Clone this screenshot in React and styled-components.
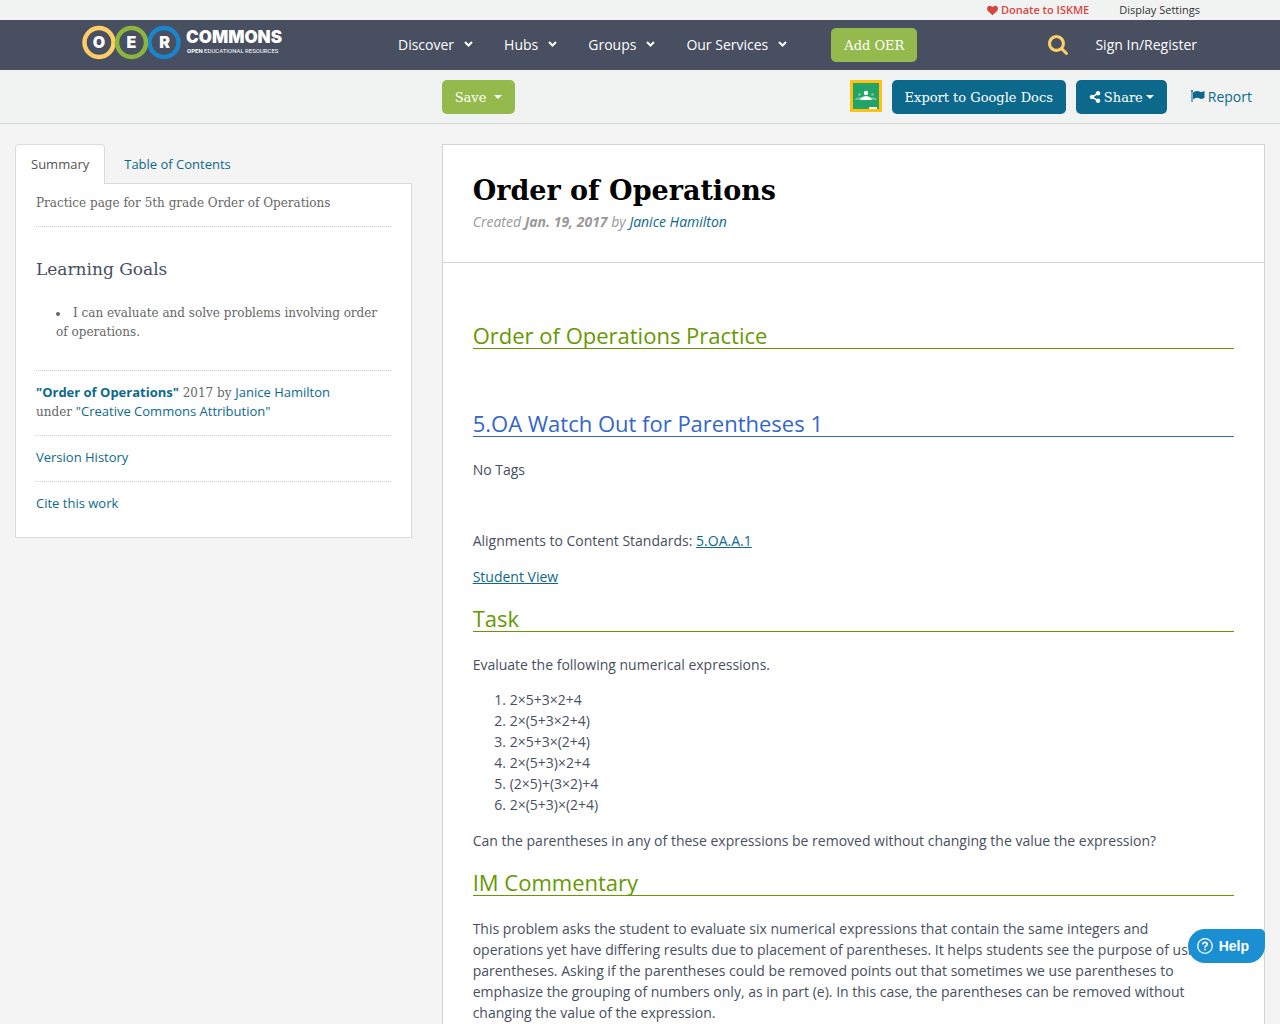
import styled, { createGlobalStyle } from "styled-components"
import { FaShareAlt } from "react-icons/fa"

const navItems = ["Discover", "Hubs", "Groups", "Our Services"]

const expressions = [
  "2×5+3×2+4",
  "2×(5+3×2+4)",
  "2×5+3×(2+4)",
  "2×(5+3)×2+4",
  "(2×5)+(3×2)+4",
  "2×(5+3)×(2+4)",
]

const Logo = () => (
  <svg width="204" height="36" viewBox="0 0 204 36" role="img" aria-label="OER Commons">
    <g fill="none" strokeWidth="4.500">
      <circle cx="17" cy="17.500" r="14.500" stroke="#fdce68" />
      <circle cx="82" cy="17.500" r="14.500" stroke="#1a85cd" />
      <circle cx="49.500" cy="17.500" r="14.500" stroke="#8bb53c" />
    </g>
    <g fill="#fff" fontFamily="Inter, sans-serif" fontWeight="900">
      <g fontSize="16" textAnchor="middle">
        <text x="17" y="23">O</text>
        <text x="49.500" y="23">E</text>
        <text x="82.500" y="23">R</text>
      </g>
      <text x="104" y="18" fontSize="17">COMMONS</text>
    </g>
    <g fill="#fff" fontFamily="Roboto, sans-serif" fontSize="6">
      <text x="105" y="28"><tspan fontWeight="bold">OPEN</tspan> EDUCATIONAL RESOURCES</text>
    </g>
  </svg>
)

const HeartIcon = () => (
  <svg width="11" height="11" viewBox="0 0 1792 1792" fill="currentColor" aria-hidden="true">
    <path d="M896 1664q-26 0-44-18l-624-602q-10-8-27.500-26t-55.500-65.500-68-97.500-53.500-121-23.500-138q0-220 127-344t351-124q62 0 126.500 21.500t120 58 95.500 68.500 76 68q36-36 76-68t95.500-68.500 120-58 126.500-21.500q224 0 351 124t127 344q0 221-229 450l-623 600q-18 18-44 18z" />
  </svg>
)

const SearchIcon = () => (
  <svg width="20" height="20" viewBox="0 128 1664 1664" fill="currentColor" aria-hidden="true">
    <path d="M1152 832q0-185-131.500-316.500t-316.500-131.500-316.500 131.500-131.500 316.500 131.500 316.500 316.500 131.500 316.500-131.500 131.500-316.500zm512 832q0 52-38 90t-90 38q-54 0-90-38l-343-342q-179 124-399 124-143 0-273.500-55.500t-225-150-150-225-55.500-273.500 55.500-273.500 150-225 225-150 273.500-55.500 273.500 55.500 225 150 150 225 55.500 273.500q0 220-124 399l343 343q37 37 37 90z" />
  </svg>
)

const FlagIcon = () => (
  <svg width="14" height="14" viewBox="64 0 1792 1792" fill="currentColor" aria-hidden="true">
    <path d="M320 256q0 72-64 110v1266q0 13-9.500 22.500t-22.500 9.500h-64q-13 0-22.500-9.500t-9.500-22.500v-1266q-64-38-64-110 0-53 37.500-90.500t90.500-37.500 90.500 37.500 37.500 90.500zm1472 64v763q0 25-12.500 38.500t-39.500 27.500q-215 116-369 116-61 0-123.500-22t-108.500-48-115.500-48-142.500-22q-192 0-464 146-17 9-33 9-26 0-45-19t-19-45v-742q0-32 31-55 21-14 79-43 236-120 421-120 107 0 200 29t219 88q38 19 88 19 54 0 117.500-21t110-47 88-47 54.500-21q26 0 45 19t19 45z" />
  </svg>
)

const Chevron = () => (
  <svg width="9" height="6" viewBox="0 0 9 6" fill="none" stroke="#fff" strokeWidth="2" aria-hidden="true">
    <path d="M1 1l3.500 3.500L8 1" />
  </svg>
)

const Caret = () => (
  <svg width="8" height="4" viewBox="0 0 8 4" fill="currentColor" aria-hidden="true">
    <path d="M0 0h8L4 4z" />
  </svg>
)

const ClassroomIcon = () => (
  <svg width="32" height="32" viewBox="0 0 32 32" aria-hidden="true">
    <path fill="#ffc112" d="M0 0h32v32H0z" />
    <path fill="#21a465" d="M3 3h26v26H3z" />
    <g fill="#68c298">
      <circle cx="9.500" cy="14.500" r="1.500" />
      <circle cx="22.500" cy="14.500" r="1.500" />
      <path d="M5 20v-1q2-2 4.500-2t4.500 2v1zM18 20v-1q2-2 4.500-2t4.500 2v1z" />
    </g>
    <g fill="#fff">
      <circle cx="16" cy="13" r="2.200" />
      <path d="M10.500 20v-1.500q2-2.500 5.500-2.500t5.500 2.500V20z" />
      <path d="M19 27h8v2h-8z" />
    </g>
  </svg>
)

const HelpIcon = () => (
  <svg width="16" height="16" viewBox="0 0 16 16" fill="none" stroke="#fff" aria-hidden="true">
    <circle cx="8" cy="8" r="7.300" strokeWidth="1.300" />
    <path strokeWidth="1.600" d="M5.800 6.400q.1-2 2.200-2t2.200 1.800q0 1-1.100 1.600T8 9.300v.4M8 10.700v1.600" />
  </svg>
)

const App = () => {
  return <>
    <GlobalStyle />
    <Page>
      <TopBar>
        <DonateLink href="#donate"><HeartIcon />Donate to ISKME</DonateLink>
        <DisplayLink href="#display">Display Settings</DisplayLink>
      </TopBar>

      <Navbar>
        <LogoLink href="#home"><Logo /></LogoLink>
        <Menu>
          {navItems.map((item) => (
            <MenuButton key={item} type="button">{item}<Chevron /></MenuButton>
          ))}
        </Menu>
        <Button type="button" $color="#94ba4d">Add OER</Button>
        <Account>
          <SearchButton type="button" aria-label="Search"><SearchIcon /></SearchButton>
          <SignIn href="#signin">Sign In/Register</SignIn>
        </Account>
      </Navbar>

      <Toolbar>
        <MainColumn>
          <ToolbarRow>
            <Button type="button" $color="#94ba4d" $gap="8px">Save<Caret /></Button>
            <Actions>
              <ClassroomButton type="button" aria-label="Google Classroom"><ClassroomIcon /></ClassroomButton>
              <Button type="button" $color="#0d698c">Export to Google Docs</Button>
              <Button type="button" $color="#0d698c" $gap="3px"><FaShareAlt size={12} />Share<Caret /></Button>
              <ReportLink href="#report"><FlagIcon />Report</ReportLink>
            </Actions>
          </ToolbarRow>
        </MainColumn>
      </Toolbar>

      <Columns>
        <SideColumn>
          <Tabs role="tablist">
            <Tab type="button" role="tab" aria-selected="true" $active>Summary</Tab>
            <Tab type="button" role="tab" aria-selected="false">Table of Contents</Tab>
          </Tabs>
          <Panel>
            <PanelItem>Practice page for 5th grade Order of Operations</PanelItem>
            <Goals>
              <h2>Learning Goals</h2>
              <ul>
                <li>I can evaluate and solve problems involving order of operations.</li>
              </ul>
            </Goals>
            <PanelItem>
              <a href="#work"><b>"Order of Operations"</b></a> 2017 by <a href="#author">Janice Hamilton</a>
              <br />
              under <a href="#license">"Creative Commons Attribution"</a>
            </PanelItem>
            <PanelItem><a href="#history">Version History</a></PanelItem>
            <PanelItem><a href="#cite">Cite this work</a></PanelItem>
          </Panel>
        </SideColumn>

        <MainColumn as="main">
          <Article>
            <ArticleHeader>
              <h1>Order of Operations</h1>
              <p>Created <b>Jan. 19, 2017</b> by <a href="#author">Janice Hamilton</a></p>
            </ArticleHeader>
            <ArticleBody>
              <Heading $gap="62px">Order of Operations Practice</Heading>
              <Heading $color="#3366cc">5.OA Watch Out for Parentheses 1</Heading>
              <Text $gap="50px">No Tags</Text>
              <Text>Alignments to Content Standards: <a href="#standard">5.OA.A.1</a></Text>
              <Text $gap="19px"><a href="#student">Student View</a></Text>
              <Heading>Task</Heading>
              <Text $gap="14px">Evaluate the following numerical expressions.</Text>
              <Expressions>
                {expressions.map((expression) => <li key={expression}>{expression}</li>)}
              </Expressions>
              <Text $gap="19px">Can the parentheses in any of these expressions be removed without changing the value the expression?</Text>
              <Heading>IM Commentary</Heading>
              <Text $gap="0">
                This problem asks the student to evaluate six numerical expressions that contain the same integers and
                operations yet have differing results due to placement of parentheses. It helps students see the purpose of
                using parentheses. Asking if the parentheses could be removed points out that sometimes we use parentheses to
                emphasize the grouping of numbers only, as in part (e). In this case, the parentheses can be removed without
                changing the value of the expression.
              </Text>
            </ArticleBody>
          </Article>
        </MainColumn>
      </Columns>
      <HelpButton type="button"><HelpIcon />Help</HelpButton>
    </Page>
  </>;
};

export default App;

const slab = `"DejaVu Serif", serif`

const GlobalStyle = createGlobalStyle`
  * {
    box-sizing: border-box;
  }

  body {
    margin: 0;
    background: #f4f4f4;
    color: #484f60;
    font-family: "Open Sans", sans-serif;
    font-size: 14px;
    line-height: 21px;
  }

  a {
    color: #0d698c;
    text-decoration: none;
  }

  button {
    border: unset;
    background: transparent;
    padding: 0;
    color: inherit;
    font-family: inherit;
    cursor: pointer;
  }

  svg {
    flex-shrink: 0;
  }
`

const Page = styled.div`
  display: flex;
  flex-direction: column;
  min-height: 100vh;
`

const TopBar = styled.div`
  display: flex;
  justify-content: flex-end;
  gap: 30px;
  padding-right: 80px;
  background: #f0f3f2;
  font-size: 11px;
  line-height: 20px;
`

const DonateLink = styled.a`
  display: flex;
  align-items: center;
  gap: 3px;
  color: #d64541;
  font-weight: 600;
`

const DisplayLink = styled.a`
  color: #333;
`

const Navbar = styled.header`
  display: flex;
  align-items: center;
  height: 50px;
  padding: 0 83px 0 82px;
  background: #484f60;
  color: #fff;
`

const LogoLink = styled.a`
  display: flex;
  margin-right: 112px;
  padding-bottom: 4px;
`

const Menu = styled.nav`
  display: flex;
  gap: 31px;
  margin-right: 44px;
`

const MenuButton = styled.button`
  display: flex;
  align-items: center;
  gap: 10px;
  padding-bottom: 2px;
  font-size: 14px;
  line-height: 21px;
`

const Button = styled.button`
  display: flex;
  align-items: center;
  gap: ${(props) => props.$gap || "0"};
  height: 34px;
  padding: 0 13px;
  border-radius: 5px;
  background: ${(props) => props.$color};
  color: #fff;
  font-family: ${slab};
  font-size: 13px;
  white-space: nowrap;
`

const Account = styled.div`
  display: flex;
  align-items: center;
  gap: 27px;
  margin-left: auto;
`

const SearchButton = styled.button`
  display: flex;
  color: #fdce68;
`

const SignIn = styled.a`
  padding-bottom: 2px;
  color: #fff;
`

const Toolbar = styled.div`
  display: flex;
  justify-content: flex-end;
  padding: 10px 0 9px;
  border-bottom: 1px solid #d2d4d4;
  background: #f0f3f2;
`

const MainColumn = styled.div`
  width: 66.6667%;
  padding: 0 15px;
`

const SideColumn = styled.aside`
  width: 33.3333%;
  padding: 0 15px;
`

const ToolbarRow = styled.div`
  display: flex;
  justify-content: space-between;
`

const Actions = styled.div`
  display: flex;
  gap: 10px;
  padding-right: 13px;
`

const ClassroomButton = styled.button`
  display: flex;
`

const ReportLink = styled.a`
  display: flex;
  align-items: center;
  gap: 3px;
  margin-left: 14px;
  padding-bottom: 2px;
`

const Columns = styled.div`
  display: flex;
  flex: 1;
  padding-top: 20px;
`

const Tabs = styled.div`
  display: flex;
  gap: 3px;
`

const Tab = styled.button`
  position: relative;
  z-index: 1;
  height: 40px;
  margin-bottom: -1px;
  padding: 0 15px 2px;
  border: 1px solid ${(props) => (props.$active ? "#dadcdc" : "transparent")};
  border-bottom: unset;
  border-radius: 4px 4px 0 0;
  background: ${(props) => (props.$active ? "#fff" : "transparent")};
  color: ${(props) => (props.$active ? "#555" : "#0d698c")};
  font-size: 13px;
`

const Panel = styled.div`
  padding: 0 20px 13px;
  border: 1px solid #dadcdc;
  background: #fff;
  color: #666;
  font-family: ${slab};
  font-size: 12px;
  line-height: 19px;

  a {
    font-family: "Open Sans", sans-serif;
    font-size: 13px;
    line-height: 17px;
  }
`

const PanelItem = styled.div`
  padding: 13px 0;
  border-bottom: 1px dotted #ccc;

  &:first-child {
    padding-top: 10px;
  }

  &:last-child {
    border-bottom: unset;
    padding-bottom: 10px;
  }
`

const Goals = styled.section`
  padding: 30px 0 28px;
  border-bottom: 1px dotted #ccc;

  h2 {
    margin: 0 0 22px;
    color: #484f60;
    font-size: 17px;
    font-weight: 400;
    line-height: 25px;
  }

  ul {
    margin: 0;
    padding-left: 20px;
    list-style-position: inside;
  }
`

const Article = styled.article`
  height: 100%;
  border: 1px solid #d2d4d4;
  border-bottom: unset;
  background: #fff;
`

const ArticleHeader = styled.header`
  padding: 29px 30px 30px;
  border-bottom: 1px solid #d2d4d4;

  h1 {
    margin: 0 0 3px;
    color: #000;
    font-family: ${slab};
    font-size: 27px;
    line-height: 34px;
  }

  p {
    margin: 0;
    color: #999;
    font-style: italic;
  }
`

const ArticleBody = styled.div`
  padding: 60px 30px 0;
`

const Heading = styled.h2`
  margin: 0 0 ${(props) => props.$gap || "22px"};
  border-bottom: 1px solid ${(props) => props.$color || "#669900"};
  color: ${(props) => props.$color || "#669900"};
  font-size: 22px;
  font-weight: 400;
  line-height: 25px;
`

const Text = styled.p`
  margin: 0 0 ${(props) => props.$gap || "15px"};
  padding-right: 20px;

  a {
    text-decoration: underline;
  }
`

const Expressions = styled.ol`
  margin: 0 0 15px;
  padding-left: 37px;
`

const HelpButton = styled.button`
  position: fixed;
  right: 15px;
  bottom: 61px;
  display: flex;
  align-items: center;
  gap: 6px;
  height: 34px;
  padding: 0 16px 0 9px;
  border-radius: 17px 5px 17px 17px;
  background: #1a8fd1;
  color: #fff;
  font-family: "Liberation Sans", sans-serif;
  font-size: 14px;
  font-weight: 700;
`
